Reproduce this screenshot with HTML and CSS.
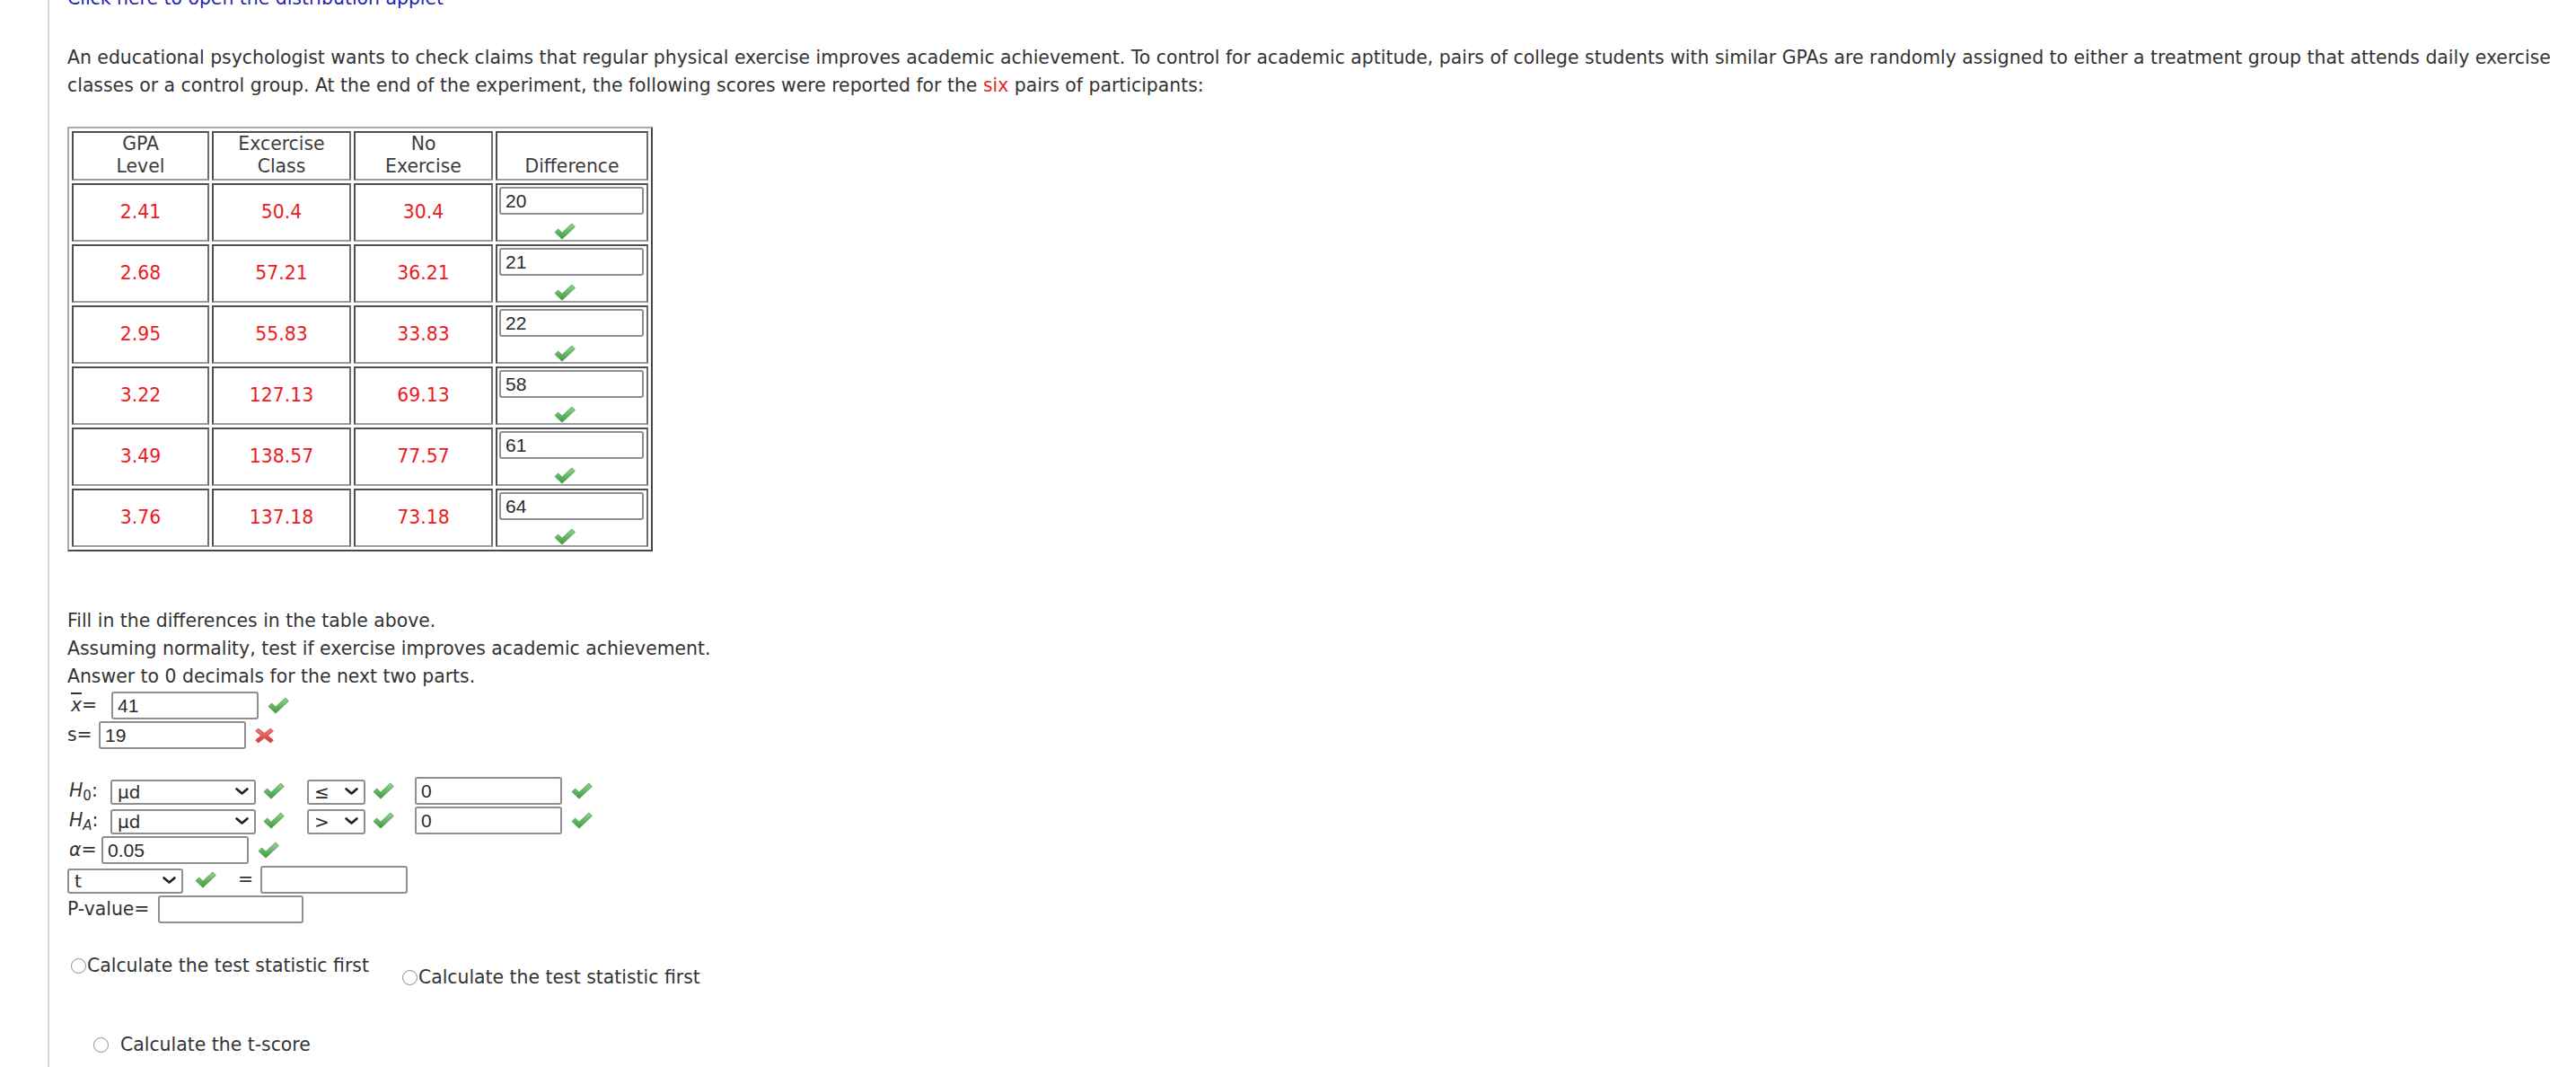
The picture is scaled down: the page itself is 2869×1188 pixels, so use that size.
FILE: index.html
```html
<!DOCTYPE html>
<html>
<head>
<meta charset="utf-8">
<title>Paired t-test</title>
<link rel="stylesheet" href="styles.css">
</head>
<body>
<svg class="defs" width="0" height="0" aria-hidden="true">
  <defs>
    <linearGradient id="gchk" x1="0" y1="0" x2="0" y2="1">
      <stop offset="0" stop-color="#92d68f"/>
      <stop offset="1" stop-color="#3c9a3c"/>
    </linearGradient>
    <linearGradient id="gx" x1="0" y1="0" x2="0" y2="1">
      <stop offset="0" stop-color="#f47c7c"/>
      <stop offset="1" stop-color="#d93636"/>
    </linearGradient>
    <symbol id="chk" viewBox="0 0 24 19">
      <path d="M1 10.6 L4.6 7 L9 11.2 L19.8 1 L23.3 4.6 L9 18.2 Z" fill="url(#gchk)" stroke="#3b8c3b" stroke-width="0.7" stroke-linejoin="round"/>
    </symbol>
    <symbol id="xm" viewBox="0 0 21 18">
      <path d="M3.6 1 L10.5 6.4 L17.4 1 L20.4 4 L14.2 9 L20.4 14 L17.4 17 L10.5 11.6 L3.6 17 L0.6 14 L6.8 9 L0.6 4 Z" fill="url(#gx)" stroke="#c73434" stroke-width="0.7" stroke-linejoin="round"/>
    </symbol>
    <symbol id="chev" viewBox="0 0 15 8">
      <path d="M1.6 1.4 L7.5 6.4 L13.4 1.4" fill="none" stroke="#1f1f1f" stroke-width="2.6" stroke-linecap="round" stroke-linejoin="round"/>
    </symbol>
  </defs>
</svg>

<div class="page">
  <a class="applet" href="#">Click here to open the distribution applet</a>

  <p class="intro">An educational psychologist wants to check claims that regular physical exercise improves academic achievement. To control for academic aptitude, pairs of college students with similar GPAs are randomly assigned to either a treatment group that attends daily exercise<br>classes or a control group. At the end of the experiment, the following scores were reported for the <span class="red">six</span> pairs of participants:</p>

  <table class="data">
    <colgroup><col class="c1"><col class="c2"><col class="c3"><col class="c4"></colgroup>
    <tr class="head"><th>GPA<br>Level</th><th>Excercise<br>Class</th><th>No<br>Exercise</th><th>Difference</th></tr>
    <tr><td>2.41</td><td>50.4</td><td>30.4</td><td class="diff"><input class="box dbox" value="20"><div class="mark"><svg class="ico chk"><use href="#chk"/></svg></div></td></tr>
    <tr><td>2.68</td><td>57.21</td><td>36.21</td><td class="diff"><input class="box dbox" value="21"><div class="mark"><svg class="ico chk"><use href="#chk"/></svg></div></td></tr>
    <tr><td>2.95</td><td>55.83</td><td>33.83</td><td class="diff"><input class="box dbox" value="22"><div class="mark"><svg class="ico chk"><use href="#chk"/></svg></div></td></tr>
    <tr><td>3.22</td><td>127.13</td><td>69.13</td><td class="diff"><input class="box dbox" value="58"><div class="mark"><svg class="ico chk"><use href="#chk"/></svg></div></td></tr>
    <tr><td>3.49</td><td>138.57</td><td>77.57</td><td class="diff"><input class="box dbox" value="61"><div class="mark"><svg class="ico chk"><use href="#chk"/></svg></div></td></tr>
    <tr><td>3.76</td><td>137.18</td><td>73.18</td><td class="diff"><input class="box dbox" value="64"><div class="mark"><svg class="ico chk"><use href="#chk"/></svg></div></td></tr>
  </table>

  <div class="instructions">
    <div class="line">Fill in the differences in the table above.</div>
    <div class="line">Assuming normality, test if exercise improves academic achievement.</div>
    <div class="line">Answer to 0 decimals for the next two parts.</div>
  </div>

  <div class="frow">
    <span class="lbl lbl-xbar"><i class="ovl">x</i>=</span>
    <input class="box w164" value="41">
    <svg class="ico chk after-in"><use href="#chk"/></svg>
  </div>
  <div class="frow">
    <span class="lbl lbl-s">s=</span>
    <input class="box w164" value="19">
    <svg class="ico xmark after-in"><use href="#xm"/></svg>
  </div>

  <div class="hyp">
    <div class="frow">
      <span class="lbl lbl-h"><i>H</i><sub>0</sub>:</span>
      <span class="sel w162"><select><option>μd</option></select><svg class="chev"><use href="#chev"/></svg></span>
      <svg class="ico chk after-sel"><use href="#chk"/></svg>
      <span class="sel w65 gap-sel"><select><option>≤</option></select><svg class="chev"><use href="#chev"/></svg></span>
      <svg class="ico chk after-sel"><use href="#chk"/></svg>
      <input class="box w164 gap-in" value="0">
      <svg class="ico chk after-in"><use href="#chk"/></svg>
    </div>
    <div class="frow">
      <span class="lbl lbl-h"><i>H</i><sub><i>A</i></sub>:</span>
      <span class="sel w162"><select><option>μd</option></select><svg class="chev"><use href="#chev"/></svg></span>
      <svg class="ico chk after-sel"><use href="#chk"/></svg>
      <span class="sel w65 gap-sel"><select><option>&gt;</option></select><svg class="chev"><use href="#chev"/></svg></span>
      <svg class="ico chk after-sel"><use href="#chk"/></svg>
      <input class="box w164 gap-in" value="0">
      <svg class="ico chk after-in"><use href="#chk"/></svg>
    </div>
    <div class="frow">
      <span class="lbl lbl-a"><i>α</i>=</span>
      <input class="box w164" value="0.05">
      <svg class="ico chk after-in"><use href="#chk"/></svg>
    </div>
    <div class="frow">
      <span class="sel w129"><select><option>t</option></select><svg class="chev"><use href="#chev"/></svg></span>
      <svg class="ico chk after-t"><use href="#chk"/></svg>
      <span class="eq">=</span>
      <input class="box w164" value="">
    </div>
    <div class="frow">
      <span class="lbl lbl-p">P-value=</span>
      <input class="box w162" value="">
    </div>
  </div>

  <div class="radios">
    <label class="ropt"><input type="radio" name="r1">Calculate the test statistic first</label>
    <label class="ropt second"><input type="radio" name="r2">Calculate the test statistic first</label>
  </div>
  <label class="ropt tscore"><input type="radio" name="r3">Calculate the t-score</label>
</div>
</body>
</html>
```

FILE: styles.css
```css
html, body {
  margin: 0;
  padding: 0;
  background: #ffffff;
  overflow: hidden;
}

body {
  width: 2869px;
  height: 1188px;
  font-family: "DejaVu Sans", Verdana, sans-serif;
  font-size: 20.4px;
  line-height: 31px;
  color: #333333;
}

.defs {
  position: absolute;
  width: 0;
  height: 0;
}

.page {
  margin-left: 53px;
  border-left: 2px solid #d6d6d6;
  padding-left: 20px;
  padding-right: 10px;
  min-height: 1240px;
}

.applet {
  display: block;
  margin-top: -17px;
  color: #2424b2;
  text-decoration: none;
}

.intro {
  margin: 35px 0 0 0;
}

.red {
  color: #ea1f26;
}

/* data table */
table.data {
  margin-top: 30px;
  border-collapse: separate;
  border-spacing: 3px;
  table-layout: fixed;
  width: 652px;
  border: 2px solid;
  border-color: #ababab #474747 #474747 #ababab;
  background: #ffffff;
}

.data col.c1 { width: 153px; }
.data col.c2 { width: 155px; }
.data col.c3 { width: 155px; }
.data col.c4 { width: 170px; }

.data th,
.data td {
  box-sizing: border-box;
  border: 2px solid;
  border-color: #4f4f4f #6e6e6e #9c9c9c #4f4f4f;
  text-align: center;
  padding: 0;
}

.data th {
  height: 55px;
  vertical-align: bottom;
  line-height: 25px;
  padding-bottom: 1px;
  font-weight: normal;
  color: #3c3c3c;
}

.data td {
  height: 65px;
  color: #f0191e;
  vertical-align: middle;
}

.data td.diff {
  vertical-align: top;
  text-align: left;
  padding: 2px 2px 0 2px;
}

.box {
  box-sizing: border-box;
  height: 31px;
  margin: 0;
  padding: 0 5px;
  border: 2px solid #8e8e8e;
  border-radius: 3px;
  background: #ffffff;
  font-family: "Liberation Sans", Arial, sans-serif;
  font-size: 21px;
  color: #2a2a2a;
  outline: none;
}

.dbox {
  display: block;
  width: 161px;
}

.mark {
  margin-top: 9px;
  height: 18px;
  padding-right: 16px;
  text-align: center;
  line-height: 0;
}

.ico {
  display: inline-block;
  flex: none;
}

.ico.chk {
  width: 24px;
  height: 19px;
}

.ico.xmark {
  width: 21px;
  height: 18px;
}

/* instructions */
.instructions {
  margin-top: 62px;
}

.line {
  height: 31px;
  white-space: nowrap;
}

.frow {
  display: flex;
  align-items: center;
  height: 33px;
}

.lbl {
  flex: none;
  white-space: nowrap;
}

.lbl-xbar { width: 45px; padding-left: 4px; }
.lbl-s { width: 35px; }
.lbl-h { width: 46px; padding-left: 2px; }
.lbl-a { width: 36px; padding-left: 2px; }
.lbl-p { width: 101px; }

.lbl i {
  font-style: italic;
}

.ovl {
  text-decoration: overline;
  text-decoration-thickness: 2px;
}

.lbl sub {
  font-size: 15px;
  line-height: 0;
  vertical-align: -4px;
}

.w164 { width: 164px; }
.w162 { width: 162px; }

.after-in { margin-left: 10px; }
.after-sel { margin-left: 8px; }
.after-t { margin-left: 13px; }

.gap-sel { margin-left: 25px; }
.gap-in { margin-left: 23px; }

.sel {
  position: relative;
  display: inline-block;
  flex: none;
  height: 28px;
}

.sel.w162 { width: 162px; }
.sel.w65 { width: 65px; }
.sel.w129 { width: 129px; }

.sel select {
  appearance: none;
  -webkit-appearance: none;
  box-sizing: border-box;
  width: 100%;
  height: 28px;
  margin: 0;
  padding: 0 0 0 6px;
  border: 2px solid #8e8e8e;
  border-radius: 3px;
  background: #ffffff;
  font-family: "DejaVu Sans", Verdana, sans-serif;
  font-size: 20px;
  color: #2a2a2a;
  outline: none;
}

.sel .chev {
  position: absolute;
  right: 8px;
  top: 10px;
  width: 15px;
  height: 8px;
  pointer-events: none;
}

.hyp {
  margin-top: 29px;
}

.eq {
  margin-left: 24px;
  margin-right: 8px;
}

/* radios */
.radios {
  display: flex;
  align-items: flex-start;
  margin-top: 31px;
}

.ropt {
  display: flex;
  align-items: center;
  height: 31px;
  white-space: nowrap;
}

.ropt input {
  appearance: none;
  -webkit-appearance: none;
  box-sizing: border-box;
  width: 17px;
  height: 17px;
  margin: 0 1px 0 4px;
  border: 1.5px solid #8a8a8a;
  border-radius: 50%;
  background: #ffffff;
  flex: none;
}

.ropt.second {
  margin-top: 13px;
  margin-left: 33px;
}

.ropt.tscore {
  margin-top: 44px;
}

.ropt.tscore input {
  margin-left: 29px;
  margin-right: 13px;
}
```
